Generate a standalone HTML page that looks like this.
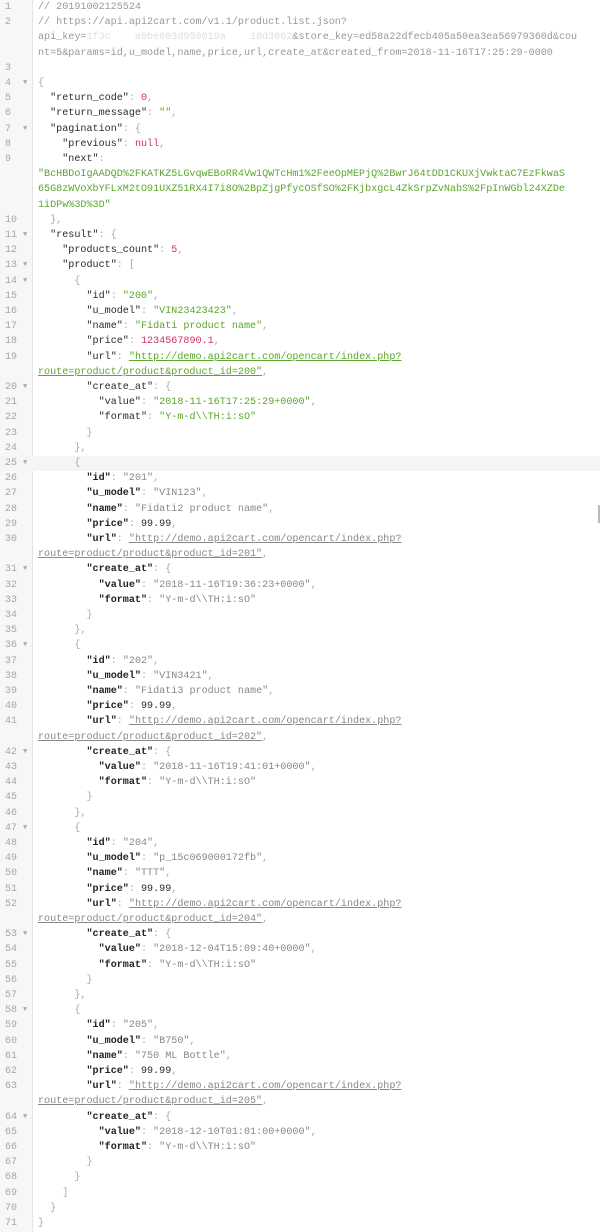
<!DOCTYPE html>
<html><head><meta charset="utf-8"><style>
html,body{margin:0;padding:0;background:#fff;width:600px;height:1232px;overflow:hidden}
body{position:relative;font-family:"Liberation Mono",monospace;font-size:10.1px;}
.g{position:absolute;left:0;top:0;width:32px;height:1232px;background:#f7f7f7;border-right:1px solid #e4e4e4}
.r{position:absolute;left:0;height:15px;line-height:15px;width:600px;white-space:pre}
.n{position:absolute;left:5px;color:#a6a6a6;font-size:10px}
.f{position:absolute;left:23px;color:#aaa;font-size:7px}
.c{position:absolute;left:38px;color:#999}
.k{color:#2a2a2a}
.kb{color:#222;font-weight:bold}
.s{color:#5ba62d}
.m{color:#d0306a}
.p{color:#aaa}
.gs{color:#888}
.u{text-decoration:underline}
.bl{color:#ddd}
.act{background:#f5f5f5}
</style></head><body>
<div class="g"></div>
<div class="r" style="top:0px"><span class="n">1</span><span class="c">// 20191002125524</span></div>
<div class="r" style="top:15.2px"><span class="n">2</span><span class="c">// https://api.api2cart.com/v1.1/product.list.json?</span></div>
<div class="r" style="top:30.4px"><span class="c">api_key=<span class="bl">1f3c    a0be603d959019a    18d3662</span>&amp;store_key=ed58a22dfecb405a50ea3ea56979360d&amp;cou</span></div>
<div class="r" style="top:45.6px"><span class="c">nt=5&amp;params=id,u_model,name,price,url,create_at&amp;created_from=2018-11-16T17:25:29-0000</span></div>
<div class="r" style="top:60.8px"><span class="n">3</span></div>
<div class="r" style="top:76px"><span class="n">4</span><span class="f">▼</span><span class="c"><span class="p">{</span></span></div>
<div class="r" style="top:91.2px"><span class="n">5</span><span class="c">  <span class="k">"return_code"</span><span class="p">: </span><span class="m">0</span><span class="p">,</span></span></div>
<div class="r" style="top:106.4px"><span class="n">6</span><span class="c">  <span class="k">"return_message"</span><span class="p">: </span><span class="s">""</span><span class="p">,</span></span></div>
<div class="r" style="top:121.6px"><span class="n">7</span><span class="f">▼</span><span class="c">  <span class="k">"pagination"</span><span class="p">: {</span></span></div>
<div class="r" style="top:136.8px"><span class="n">8</span><span class="c">    <span class="k">"previous"</span><span class="p">: </span><span class="m">null</span><span class="p">,</span></span></div>
<div class="r" style="top:152px"><span class="n">9</span><span class="c">    <span class="k">"next"</span><span class="p">:</span></span></div>
<div class="r" style="top:167.2px"><span class="c"><span class="s">"BcHBDoIgAADQD%2FKATKZ5LGvqwEBoRR4Vw1QWTcHm1%2FeeOpMEPjQ%2BwrJ64tDD1CKUXjVwktaC7EzFkwaS</span></span></div>
<div class="r" style="top:182.4px"><span class="c"><span class="s">65G8zWVoXbYFLxM2tO91UXZ51RX4I7i8O%2BpZjgPfycOSfSO%2FKjbxgcL4ZkSrpZvNabS%2FpInWGbl24XZDe</span></span></div>
<div class="r" style="top:197.6px"><span class="c"><span class="s">1iDPw%3D%3D"</span></span></div>
<div class="r" style="top:212.8px"><span class="n">10</span><span class="c">  <span class="p">},</span></span></div>
<div class="r" style="top:228px"><span class="n">11</span><span class="f">▼</span><span class="c">  <span class="k">"result"</span><span class="p">: {</span></span></div>
<div class="r" style="top:243.2px"><span class="n">12</span><span class="c">    <span class="k">"products_count"</span><span class="p">: </span><span class="m">5</span><span class="p">,</span></span></div>
<div class="r" style="top:258.4px"><span class="n">13</span><span class="f">▼</span><span class="c">    <span class="k">"product"</span><span class="p">: [</span></span></div>
<div class="r" style="top:273.6px"><span class="n">14</span><span class="f">▼</span><span class="c">      <span class="p">{</span></span></div>
<div class="r" style="top:288.8px"><span class="n">15</span><span class="c">        <span class="k">"id"</span><span class="p">: </span><span class="s">"200"</span><span class="p">,</span></span></div>
<div class="r" style="top:304px"><span class="n">16</span><span class="c">        <span class="k">"u_model"</span><span class="p">: </span><span class="s">"VIN23423423"</span><span class="p">,</span></span></div>
<div class="r" style="top:319.2px"><span class="n">17</span><span class="c">        <span class="k">"name"</span><span class="p">: </span><span class="s">"Fidati product name"</span><span class="p">,</span></span></div>
<div class="r" style="top:334.4px"><span class="n">18</span><span class="c">        <span class="k">"price"</span><span class="p">: </span><span class="m">1234567890.1</span><span class="p">,</span></span></div>
<div class="r" style="top:349.6px"><span class="n">19</span><span class="c">        <span class="k">"url"</span><span class="p">: </span><span class="s u">"http://demo.api2cart.com/opencart/index.php?</span></span></div>
<div class="r" style="top:364.8px"><span class="c"><span class="s u">route=product/product&amp;product_id=200"</span><span class="p">,</span></span></div>
<div class="r" style="top:380px"><span class="n">20</span><span class="f">▼</span><span class="c">        <span class="k">"create_at"</span><span class="p">: {</span></span></div>
<div class="r" style="top:395.2px"><span class="n">21</span><span class="c">          <span class="k">"value"</span><span class="p">: </span><span class="s">"2018-11-16T17:25:29+0000"</span><span class="p">,</span></span></div>
<div class="r" style="top:410.4px"><span class="n">22</span><span class="c">          <span class="k">"format"</span><span class="p">: </span><span class="s">"Y-m-d\\TH:i:sO"</span></span></div>
<div class="r" style="top:425.6px"><span class="n">23</span><span class="c">        <span class="p">}</span></span></div>
<div class="r" style="top:440.8px"><span class="n">24</span><span class="c">      <span class="p">},</span></span></div>
<div class="r act" style="top:456px"><span class="n">25</span><span class="f">▼</span><span class="c">      <span class="p">{</span></span></div>
<div class="r" style="top:471.2px"><span class="n">26</span><span class="c">        <span class="kb">"id"</span><span class="p">: </span><span class="gs">"201"</span><span class="p">,</span></span></div>
<div class="r" style="top:486.4px"><span class="n">27</span><span class="c">        <span class="kb">"u_model"</span><span class="p">: </span><span class="gs">"VIN123"</span><span class="p">,</span></span></div>
<div class="r" style="top:501.6px"><span class="n">28</span><span class="c">        <span class="kb">"name"</span><span class="p">: </span><span class="gs">"Fidati2 product name"</span><span class="p">,</span></span></div>
<div class="r" style="top:516.8px"><span class="n">29</span><span class="c">        <span class="kb">"price"</span><span class="p">: </span><span class="k">99.99</span><span class="p">,</span></span></div>
<div class="r" style="top:532px"><span class="n">30</span><span class="c">        <span class="kb">"url"</span><span class="p">: </span><span class="gs u">"http://demo.api2cart.com/opencart/index.php?</span></span></div>
<div class="r" style="top:547.2px"><span class="c"><span class="gs u">route=product/product&amp;product_id=201"</span><span class="p">,</span></span></div>
<div class="r" style="top:562.4px"><span class="n">31</span><span class="f">▼</span><span class="c">        <span class="kb">"create_at"</span><span class="p">: {</span></span></div>
<div class="r" style="top:577.6px"><span class="n">32</span><span class="c">          <span class="kb">"value"</span><span class="p">: </span><span class="gs">"2018-11-16T19:36:23+0000"</span><span class="p">,</span></span></div>
<div class="r" style="top:592.8px"><span class="n">33</span><span class="c">          <span class="kb">"format"</span><span class="p">: </span><span class="gs">"Y-m-d\\TH:i:sO"</span></span></div>
<div class="r" style="top:608px"><span class="n">34</span><span class="c">        <span class="p">}</span></span></div>
<div class="r" style="top:623.2px"><span class="n">35</span><span class="c">      <span class="p">},</span></span></div>
<div class="r" style="top:638.4px"><span class="n">36</span><span class="f">▼</span><span class="c">      <span class="p">{</span></span></div>
<div class="r" style="top:653.6px"><span class="n">37</span><span class="c">        <span class="kb">"id"</span><span class="p">: </span><span class="gs">"202"</span><span class="p">,</span></span></div>
<div class="r" style="top:668.8px"><span class="n">38</span><span class="c">        <span class="kb">"u_model"</span><span class="p">: </span><span class="gs">"VIN3421"</span><span class="p">,</span></span></div>
<div class="r" style="top:684px"><span class="n">39</span><span class="c">        <span class="kb">"name"</span><span class="p">: </span><span class="gs">"Fidati3 product name"</span><span class="p">,</span></span></div>
<div class="r" style="top:699.2px"><span class="n">40</span><span class="c">        <span class="kb">"price"</span><span class="p">: </span><span class="k">99.99</span><span class="p">,</span></span></div>
<div class="r" style="top:714.4px"><span class="n">41</span><span class="c">        <span class="kb">"url"</span><span class="p">: </span><span class="gs u">"http://demo.api2cart.com/opencart/index.php?</span></span></div>
<div class="r" style="top:729.6px"><span class="c"><span class="gs u">route=product/product&amp;product_id=202"</span><span class="p">,</span></span></div>
<div class="r" style="top:744.8px"><span class="n">42</span><span class="f">▼</span><span class="c">        <span class="kb">"create_at"</span><span class="p">: {</span></span></div>
<div class="r" style="top:760px"><span class="n">43</span><span class="c">          <span class="kb">"value"</span><span class="p">: </span><span class="gs">"2018-11-16T19:41:01+0000"</span><span class="p">,</span></span></div>
<div class="r" style="top:775.2px"><span class="n">44</span><span class="c">          <span class="kb">"format"</span><span class="p">: </span><span class="gs">"Y-m-d\\TH:i:sO"</span></span></div>
<div class="r" style="top:790.4px"><span class="n">45</span><span class="c">        <span class="p">}</span></span></div>
<div class="r" style="top:805.6px"><span class="n">46</span><span class="c">      <span class="p">},</span></span></div>
<div class="r" style="top:820.8px"><span class="n">47</span><span class="f">▼</span><span class="c">      <span class="p">{</span></span></div>
<div class="r" style="top:836px"><span class="n">48</span><span class="c">        <span class="kb">"id"</span><span class="p">: </span><span class="gs">"204"</span><span class="p">,</span></span></div>
<div class="r" style="top:851.2px"><span class="n">49</span><span class="c">        <span class="kb">"u_model"</span><span class="p">: </span><span class="gs">"p_15c069000172fb"</span><span class="p">,</span></span></div>
<div class="r" style="top:866.4px"><span class="n">50</span><span class="c">        <span class="kb">"name"</span><span class="p">: </span><span class="gs">"TTT"</span><span class="p">,</span></span></div>
<div class="r" style="top:881.6px"><span class="n">51</span><span class="c">        <span class="kb">"price"</span><span class="p">: </span><span class="k">99.99</span><span class="p">,</span></span></div>
<div class="r" style="top:896.8px"><span class="n">52</span><span class="c">        <span class="kb">"url"</span><span class="p">: </span><span class="gs u">"http://demo.api2cart.com/opencart/index.php?</span></span></div>
<div class="r" style="top:912px"><span class="c"><span class="gs u">route=product/product&amp;product_id=204"</span><span class="p">,</span></span></div>
<div class="r" style="top:927.2px"><span class="n">53</span><span class="f">▼</span><span class="c">        <span class="kb">"create_at"</span><span class="p">: {</span></span></div>
<div class="r" style="top:942.4px"><span class="n">54</span><span class="c">          <span class="kb">"value"</span><span class="p">: </span><span class="gs">"2018-12-04T15:09:40+0000"</span><span class="p">,</span></span></div>
<div class="r" style="top:957.6px"><span class="n">55</span><span class="c">          <span class="kb">"format"</span><span class="p">: </span><span class="gs">"Y-m-d\\TH:i:sO"</span></span></div>
<div class="r" style="top:972.8px"><span class="n">56</span><span class="c">        <span class="p">}</span></span></div>
<div class="r" style="top:988px"><span class="n">57</span><span class="c">      <span class="p">},</span></span></div>
<div class="r" style="top:1003.2px"><span class="n">58</span><span class="f">▼</span><span class="c">      <span class="p">{</span></span></div>
<div class="r" style="top:1018.4px"><span class="n">59</span><span class="c">        <span class="kb">"id"</span><span class="p">: </span><span class="gs">"205"</span><span class="p">,</span></span></div>
<div class="r" style="top:1033.6px"><span class="n">60</span><span class="c">        <span class="kb">"u_model"</span><span class="p">: </span><span class="gs">"B750"</span><span class="p">,</span></span></div>
<div class="r" style="top:1048.8px"><span class="n">61</span><span class="c">        <span class="kb">"name"</span><span class="p">: </span><span class="gs">"750 ML Bottle"</span><span class="p">,</span></span></div>
<div class="r" style="top:1064px"><span class="n">62</span><span class="c">        <span class="kb">"price"</span><span class="p">: </span><span class="k">99.99</span><span class="p">,</span></span></div>
<div class="r" style="top:1079.2px"><span class="n">63</span><span class="c">        <span class="kb">"url"</span><span class="p">: </span><span class="gs u">"http://demo.api2cart.com/opencart/index.php?</span></span></div>
<div class="r" style="top:1094.4px"><span class="c"><span class="gs u">route=product/product&amp;product_id=205"</span><span class="p">,</span></span></div>
<div class="r" style="top:1109.6px"><span class="n">64</span><span class="f">▼</span><span class="c">        <span class="kb">"create_at"</span><span class="p">: {</span></span></div>
<div class="r" style="top:1124.8px"><span class="n">65</span><span class="c">          <span class="kb">"value"</span><span class="p">: </span><span class="gs">"2018-12-10T01:01:00+0000"</span><span class="p">,</span></span></div>
<div class="r" style="top:1140px"><span class="n">66</span><span class="c">          <span class="kb">"format"</span><span class="p">: </span><span class="gs">"Y-m-d\\TH:i:sO"</span></span></div>
<div class="r" style="top:1155.2px"><span class="n">67</span><span class="c">        <span class="p">}</span></span></div>
<div class="r" style="top:1170.4px"><span class="n">68</span><span class="c">      <span class="p">}</span></span></div>
<div class="r" style="top:1185.6px"><span class="n">69</span><span class="c">    <span class="p">]</span></span></div>
<div class="r" style="top:1200.8px"><span class="n">70</span><span class="c">  <span class="p">}</span></span></div>
<div class="r" style="top:1216px"><span class="n">71</span><span class="c"><span class="p">}</span></span></div>
<div style="position:absolute;left:598px;top:505px;width:2px;height:18px;background:#bbb"></div>
</body></html>
